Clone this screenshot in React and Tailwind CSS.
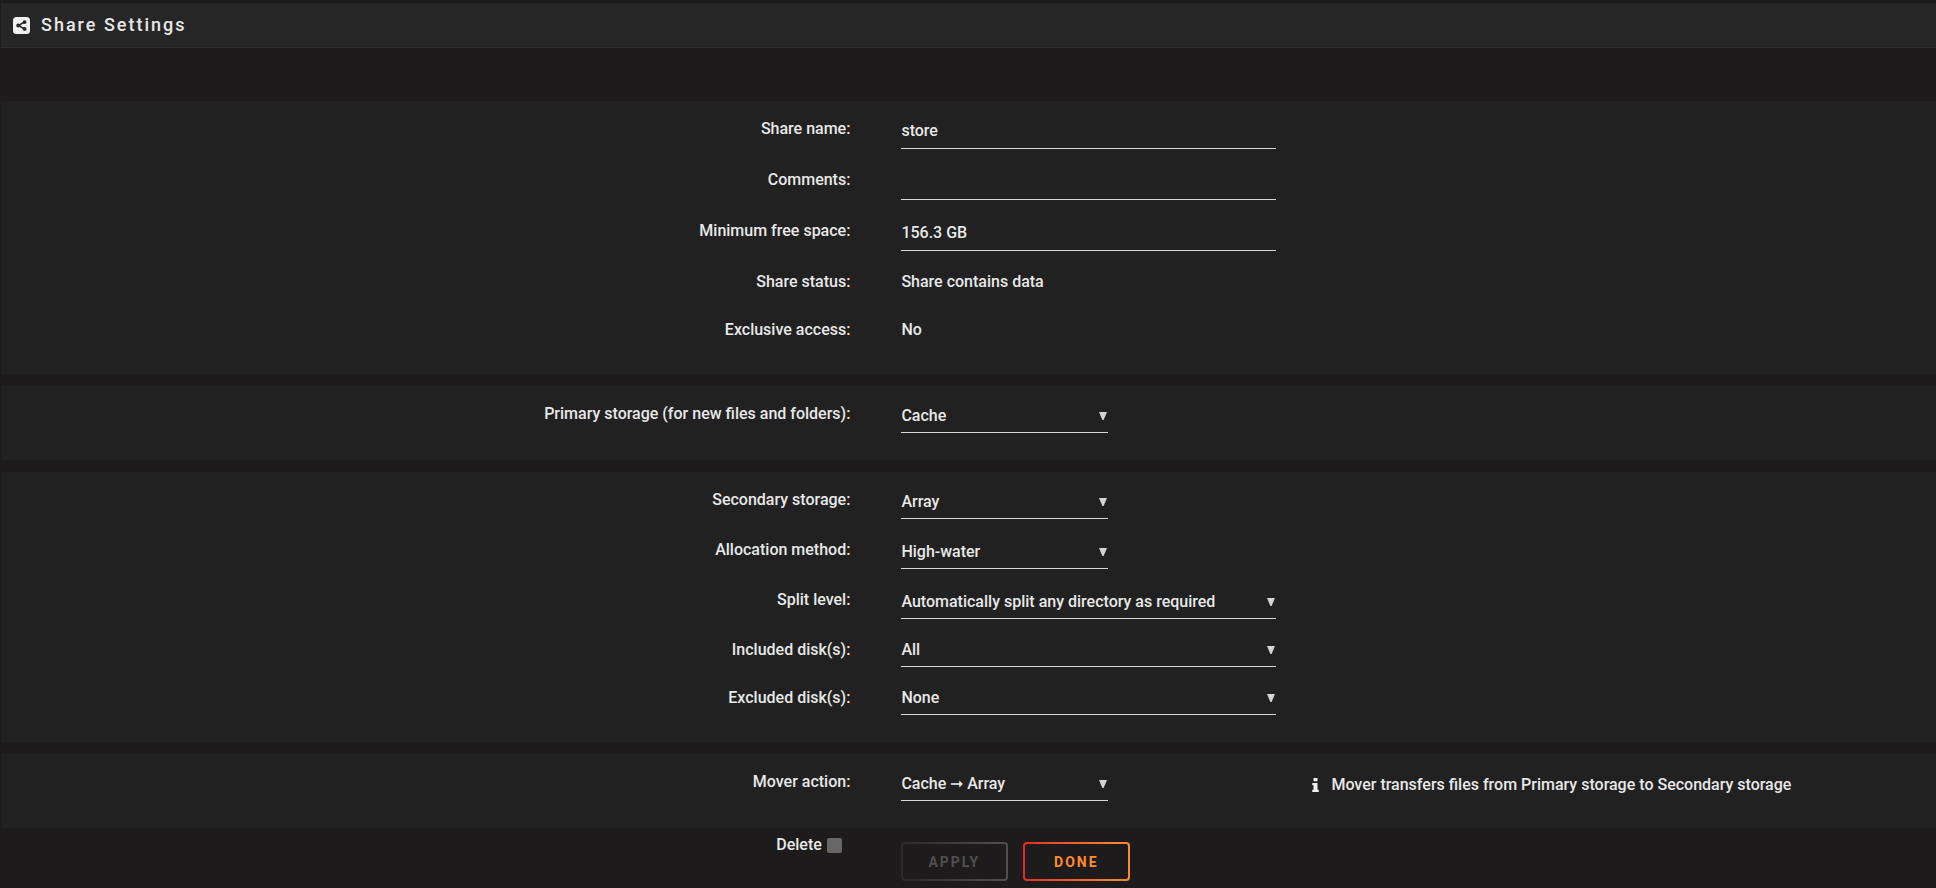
const LABEL = "w-[44%] shrink-0 pr-0.5 text-right";

function ShareSquareIcon() {
  return (
    <svg viewBox="0 0 17 17" className="size-[17px]" aria-hidden="true">
      <rect width="17" height="17" rx="3.5" fill="#f2f2f2" />
      <path d="M11.6 5 5.4 8.5l6.2 3.5" fill="none" stroke="#262626" strokeWidth="1.5" />
      <circle cx="11.6" cy="5.1" r="1.9" fill="#262626" />
      <circle cx="5.2" cy="8.5" r="1.9" fill="#262626" />
      <circle cx="11.6" cy="11.9" r="1.9" fill="#262626" />
    </svg>
  );
}

function InfoIcon() {
  return (
    <svg viewBox="0 0 7 14" className="mt-[5px] h-3.5 w-[7px] shrink-0" fill="#f2f2f2" aria-hidden="true">
      <path d="M1.5 0h4v3.2h-4zM0.3 5h5.2v6.8h1.3V14H0.3v-2.200h1.200V7.200H0.3z" />
    </svg>
  );
}

function ValueRow({ id, label, value }) {
  return (
    <div className="flex h-12">
      <label htmlFor={id} className={LABEL}>{label}</label>
      <output id={id} className="ml-[49px]">{value}</output>
    </div>
  );
}

function TextRow({ id, label, value }) {
  return (
    <div className="flex h-[51px]">
      <label htmlFor={id} className={LABEL}>{label}</label>
      <input
        id={id}
        type="text"
        defaultValue={value}
        className="ml-[49px] h-8 w-[375px] border-b border-[#d8d8d8] bg-transparent pb-[5px] outline-none"
      />
    </div>
  );
}

function SelectRow({ id, label, options, wide, compact, note }) {
  return (
    <div className={`flex ${compact ? "h-12" : "h-[50px]"}`}>
      <label htmlFor={id} className={LABEL}>{label}</label>
      <div className={`relative ml-[49px] shrink-0 ${wide ? "w-[375px]" : "w-[207px]"} ${compact ? "h-[29px]" : "h-[31px]"}`}>
        <select
          id={id}
          className={`h-full w-full appearance-none border-b border-[#d8d8d8] bg-transparent pr-6 outline-none ${compact ? "pb-2" : "pb-[3px]"}`}
        >
          {options.map((o) => (
            <option key={o} className="bg-[#212121]">{o}</option>
          ))}
        </select>
        <svg
          viewBox="0 0 8 8"
          className={`pointer-events-none absolute right-px size-2 ${compact ? "top-2" : "top-[10px]"}`}
          fill="#d4d4d4"
          aria-hidden="true"
        >
          <path d="M0 0h8L4.600 8H3.400z" />
        </svg>
      </div>
      {note && (
        <p className="ml-[204px] flex gap-3 pt-[3px] whitespace-nowrap">
          <InfoIcon />
          {note}
        </p>
      )}
    </div>
  );
}

function Panel({ children }) {
  return <section className="ml-px bg-[#212121] pt-4 pb-2">{children}</section>;
}

export default function App() {
  return (
    <main className="min-h-screen overflow-x-hidden bg-[#1d1b1c] pt-[3px] font-[Roboto,'Liberation_Sans',sans-serif] text-base leading-6 font-medium text-[#e8e8e8]">
      <header className="mb-[53px] ml-px flex h-[45px] items-center gap-[11px] border-b border-[#2f3130] bg-[#262626] pl-3">
        <ShareSquareIcon />
        <h1 className="text-lg font-medium tracking-[2px]">Share Settings</h1>
      </header>
      <form onSubmit={(e) => e.preventDefault()}>
        <div className="flex flex-col gap-3">
          <Panel>
            <TextRow id="name" label="Share name:" value="store" />
            <TextRow id="comments" label="Comments:" value="" />
            <TextRow id="floor" label="Minimum free space:" value="156.3 GB" />
            <ValueRow id="status" label="Share status:" value="Share contains data" />
            <ValueRow id="exclusive" label="Exclusive access:" value="No" />
          </Panel>
          <Panel>
            <SelectRow id="primary" label="Primary storage (for new files and folders):" options={["Cache", "Array"]} />
          </Panel>
          <Panel>
            <SelectRow id="secondary" label="Secondary storage:" options={["Array", "None"]} />
            <SelectRow id="allocation" label="Allocation method:" options={["High-water", "Fill-up", "Most-free"]} />
            <SelectRow id="split" wide label="Split level:" options={["Automatically split any directory as required"]} />
            <SelectRow id="included" wide compact label="Included disk(s):" options={["All"]} />
            <SelectRow id="excluded" wide compact label="Excluded disk(s):" options={["None"]} />
          </Panel>
          <Panel>
            <SelectRow
              id="mover"
              label="Mover action:"
              options={["Cache ➞ Array", "Array ➞ Cache"]}
              note="Mover transfers files from Primary storage to Secondary storage"
            />
          </Panel>
        </div>
        <div className="flex">
          <div className="flex w-[44%] shrink-0 justify-end gap-[5px] pt-[5px] pr-[10px]">
            <label htmlFor="delete">Delete</label>
            <input id="delete" type="checkbox" className="mt-[5px] size-[15px] appearance-none rounded-[2px] bg-[#676767]" />
          </div>
          <div className="ml-[49px] flex gap-[15px] pt-[14px] text-sm font-bold tracking-[2px]">
            <button type="submit" disabled className="h-[39px] w-[107px] rounded-[4px] bg-linear-to-r from-[#2b2a2b] to-[#4f4f4f] p-0.5 text-[#4f4f4f]">
              <span className="flex h-full items-center justify-center rounded-[2px] bg-[#1d1b1c]">APPLY</span>
            </button>
            <button type="button" className="h-[39px] w-[107px] rounded-[4px] bg-linear-to-r from-[#e22828] to-[#ff8c2f] p-0.5 text-[#ff8c2f]">
              <span className="flex h-full items-center justify-center rounded-[2px] bg-[#1d1b1c]">DONE</span>
            </button>
          </div>
        </div>
      </form>
    </main>
  );
}
